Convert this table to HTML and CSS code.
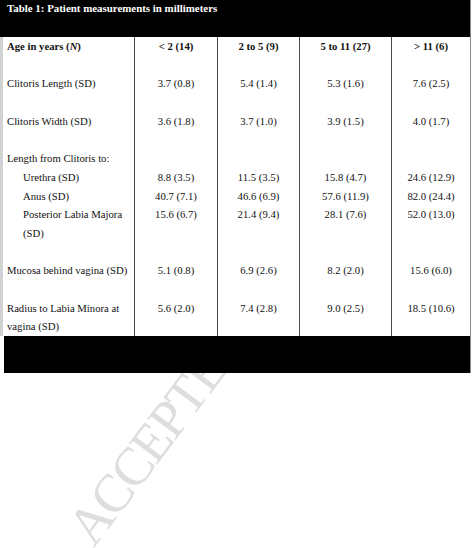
FILE: index.html
```html
<!DOCTYPE html>
<html lang="en">
<head>
<meta charset="utf-8">
<title>Table 1: Patient measurements in millimeters</title>
<link rel="stylesheet" href="styles.css">
</head>
<body>
<div class="page">
  <div class="watermark" aria-hidden="true">ACCEPTED MANUSCRIPT</div>
  <div class="caption">Table 1: Patient measurements in millimeters</div>
  <div class="grid" role="table">
    <div class="cell label head gap">Age in years (<i>N</i>)</div>
    <div class="cell head gap">&lt; 2 (14)</div>
    <div class="cell head gap">2 to 5 (9)</div>
    <div class="cell head gap">5 to 11 (27)</div>
    <div class="cell head gap">&gt; 11 (6)</div>

    <div class="cell label gap">Clitoris Length (SD)</div>
    <div class="cell gap">3.7 (0.8)</div>
    <div class="cell gap">5.4 (1.4)</div>
    <div class="cell gap">5.3 (1.6)</div>
    <div class="cell gap">7.6 (2.5)</div>

    <div class="cell label gap">Clitoris Width (SD)</div>
    <div class="cell gap">3.6 (1.8)</div>
    <div class="cell gap">3.7 (1.0)</div>
    <div class="cell gap">3.9 (1.5)</div>
    <div class="cell gap">4.0 (1.7)</div>

    <div class="cell label">Length from Clitoris to:</div>
    <div class="cell"></div>
    <div class="cell"></div>
    <div class="cell"></div>
    <div class="cell"></div>

    <div class="cell label sub">Urethra (SD)</div>
    <div class="cell">8.8 (3.5)</div>
    <div class="cell">11.5 (3.5)</div>
    <div class="cell">15.8 (4.7)</div>
    <div class="cell">24.6 (12.9)</div>

    <div class="cell label sub">Anus (SD)</div>
    <div class="cell">40.7 (7.1)</div>
    <div class="cell">46.6 (6.9)</div>
    <div class="cell">57.6 (11.9)</div>
    <div class="cell">82.0 (24.4)</div>

    <div class="cell label sub gap">Posterior Labia Majora<br>(SD)</div>
    <div class="cell gap">15.6 (6.7)</div>
    <div class="cell gap">21.4 (9.4)</div>
    <div class="cell gap">28.1 (7.6)</div>
    <div class="cell gap">52.0 (13.0)</div>

    <div class="cell label gap">Mucosa behind vagina (SD)</div>
    <div class="cell gap">5.1 (0.8)</div>
    <div class="cell gap">6.9 (2.6)</div>
    <div class="cell gap">8.2 (2.0)</div>
    <div class="cell gap">15.6 (6.0)</div>

    <div class="cell label">Radius to Labia Minora at<br>vagina (SD)</div>
    <div class="cell">5.6 (2.0)</div>
    <div class="cell">7.4 (2.8)</div>
    <div class="cell">9.0 (2.5)</div>
    <div class="cell">18.5 (10.6)</div>
  </div>
  <div class="footer"></div>
</div>
</body>
</html>
```
FILE: styles.css
```css
html, body {
  margin: 0;
  padding: 0;
  background: #ffffff;
  overflow: hidden;
}

.page {
  position: relative;
  width: 474px;
  height: 548px;
  overflow: hidden;
  font-family: "Liberation Serif", "Times New Roman", serif;
  color: #111111;
  isolation: isolate;
}

.watermark {
  position: absolute;
  left: 101px;
  top: 500px;
  z-index: -1;
  font-size: 54px;
  line-height: 54px;
  white-space: nowrap;
  color: #dedede;
  transform-origin: 0 100%;
  transform: rotate(-53deg);
  letter-spacing: -2.5px;
}

.caption {
  width: 463px;
  height: 36px;
  padding-top: 1px;
  padding-left: 7px;
  background: #000000;
  border-right: 1px solid #8a8a8a;
  color: #ffffff;
  font-weight: bold;
  font-size: 10.9px;
  line-height: 14px;
}

.grid {
  display: grid;
  grid-template-columns: 131px 83px 82px 92px 79px;
  width: 467px;
  border-left: 3px solid #d2d2d2;
  border-right: 1px solid #8a8a8a;
  background: #ffffff;
  font-size: 10.7px;
  line-height: 18.7px;
}

.cell {
  border-left: 1px solid #4a4a4a;
  text-align: center;
  white-space: nowrap;
}

.cell.label {
  border-left: none;
  text-align: left;
  padding-left: 4px;
}

.cell.sub {
  padding-left: 20px;
}

.cell.gap {
  padding-bottom: 18.7px;
}

.cell.head {
  font-weight: bold;
}

.footer {
  margin-left: 4px;
  width: 466px;
  height: 37px;
  background: #000000;
  border-right: 1px solid #8a8a8a;
}
```
